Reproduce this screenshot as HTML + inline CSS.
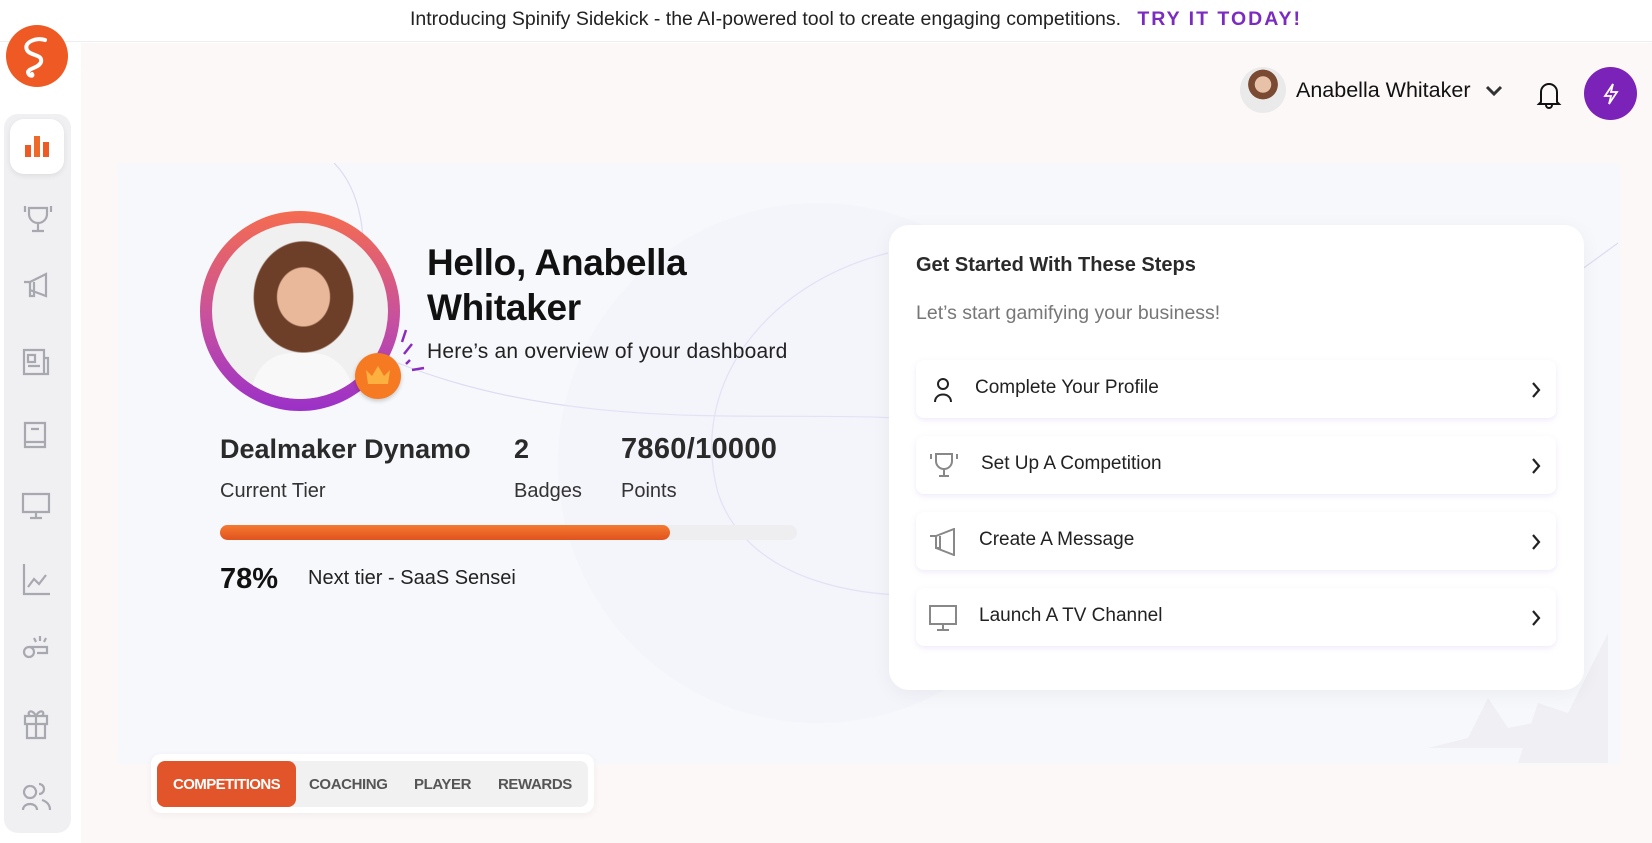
<!DOCTYPE html>
<html><head><meta charset="utf-8"><style>
*{margin:0;padding:0;box-sizing:border-box}
body{width:1652px;height:843px;overflow:hidden;background:#fff;font-family:"Liberation Sans",sans-serif;position:relative;color:#222}
.a{position:absolute}
.item{position:absolute;left:916px;width:640px;height:58px;background:#fff;border-radius:8px;box-shadow:0 2px 6px rgba(170,140,220,.18)}
.item .t{position:absolute;top:17px;font-size:19px;color:#222}
.item .ch{position:absolute;right:14px;top:21px}
.lbl{font-size:20px;color:#333}
</style></head><body>
<div class="a" style="left:0;top:0;width:1652px;height:42px;background:#fff;border-bottom:1px solid #eee"></div>
<div class="a" style="left:410px;top:8px;font-size:19.5px;color:#222;white-space:nowrap">Introducing Spinify Sidekick - the AI-powered tool to create engaging competitions. &nbsp;&nbsp;<b style="color:#7b2bbf;letter-spacing:2px">TRY IT TODAY!</b></div>
<svg class="a" style="left:5px;top:24px" width="64" height="64" viewBox="0 0 64 64"><circle cx="32" cy="32" r="31" fill="#ef5a24"/><path d="M40 16c-8-3-22 2-18 10 3 6 16 4 14 12-2 6-12 6-13 10 0 4 6 5 4 2" stroke="#fff" stroke-width="4" fill="none" stroke-linecap="round"/></svg>
<div class="a" style="left:4px;top:114px;width:67px;height:719px;background:#f0f0f2;border-radius:14px"></div>
<div class="a" style="left:10px;top:119px;width:54px;height:55px;background:#fff;border-radius:14px;box-shadow:0 2px 6px rgba(0,0,0,.08)"></div>
<svg class="a" style="left:24px;top:133px" width="26" height="26"><rect x="1" y="12" width="6" height="12" fill="#ef5a24"/><rect x="10" y="3" width="6" height="21" fill="#ef6a2a"/><rect x="19" y="9" width="6" height="15" fill="#ef5a24"/></svg>
<svg class="a" style="left:0;top:0" width="80" height="843" fill="none" stroke="#a8a8b0" stroke-width="2.2">
<path d="M29 208h18v6a9 9 0 0 1-18 0z M38 223v7 M32 231h12 M25 206v6 M51 206v6"/>
<path d="M24 282h6v14h4v-14 M30 282l16-8v22l-16-6"/>
<path d="M24 350h20v24H24z M44 358h4v16h-4 M28 355h7v7h-7z M28 366h12"/>
<path d="M25 423h20v24H25z M25 442h20 M31 429h8"/>
<path d="M23 494h26v18H23z M36 512v6 M30 518h12"/>
<path d="M24 564v30h26 M28 587l6-8 5 5 7-9"/>
<path d="M24 652a5 5 0 1 0 10 0a5 5 0 0 0-10 0 M29 647h18v6h-10 M34 638l2 4 M40 636v5 M46 638l-2 4"/>
<path d="M25 716h22v8H25z M27 724h18v14H27z M36 716v22 M36 716c-4-8-10-4-6 0 M36 716c4-8 10-4 6 0"/>
<path d="M30 786a6 6 0 1 0 0.1 0 M23 810c0-8 14-8 14 0 M39 784a5 5 0 0 1 0 10 M42 800c6 2 8 6 8 10"/>
</svg>
<div class="a" style="left:81px;top:43px;width:1571px;height:800px;background:#fdf8f8"></div>
<div class="a" style="left:1240px;top:67px;width:46px;height:46px;border-radius:50%;background:radial-gradient(circle at 50% 38%,#e8c2a8 0 22%,#7a4a32 23% 40%,#eaeaea 41%)"></div>
<div class="a" style="left:1296px;top:78px;font-size:21.5px;color:#111">Anabella Whitaker</div>
<svg class="a" style="left:1484px;top:84px" width="20" height="14"><path d="M3 3l7 7 7-7" stroke="#333" stroke-width="3" fill="none"/></svg>
<svg class="a" style="left:1535px;top:78px" width="28" height="32" fill="none" stroke="#111" stroke-width="2"><path d="M6 24V14a8 8 0 0 1 16 0v10l2 2H4z M11 27a3 3 0 0 0 6 0"/></svg>
<div class="a" style="left:1584px;top:67px;width:53px;height:53px;border-radius:50%;background:#7b22b8"></div>
<svg class="a" style="left:1600px;top:82px" width="22" height="24"><path d="M13 2L5 14h6l-2 8 8-12h-6z" stroke="#fff" stroke-width="1.8" fill="none"/></svg>
<div class="a" style="left:118px;top:163px;width:1502px;height:601px;background:#f7f8fc"></div>
<svg class="a" style="left:118px;top:163px" width="1502" height="601" fill="none" stroke="#dcdcf2" stroke-width="1.2">
<path d="M216 0c30 30 30 80 30 100"/>
<path d="M280 200c200 80 420 40 550 60"/>
<path d="M770 90c-120 30-200 130-170 240 30 90 150 110 240 100"/>
<circle cx="700" cy="300" r="260" fill="rgba(238,238,248,.35)" stroke="none"/>
<path d="M1390 160l110-80"/>
<path d="M1310 585l40-10 20-40 20 30 40-8-25 28z M1400 600l20-60 30 10 40-80v130z" fill="#efeff4" stroke="none"/>
</svg>
<div class="a" style="left:200px;top:211px;width:200px;height:200px;border-radius:50%;background:linear-gradient(#f56c4f,#c650a0 55%,#9b30c8)"></div>
<div class="a" style="left:212px;top:223px;width:176px;height:176px;border-radius:50%;background:radial-gradient(ellipse at 52% 42%,#e9b89a 0 20%,#6e3f28 21% 38%,#f0f0f0 39%);overflow:hidden"><div class="a" style="left:40px;top:130px;width:100px;height:60px;background:#f8f8f8;border-radius:40px 40px 0 0"></div></div>
<div class="a" style="left:355px;top:353px;width:46px;height:46px;border-radius:50%;background:#f57a22;box-shadow:0 2px 4px rgba(0,0,0,.2)"></div>
<svg class="a" style="left:364px;top:364px" width="28" height="22"><path d="M2 6l6 6 6-10 6 10 6-6-2 14H4z" fill="#fcb040"/></svg>
<svg class="a" style="left:396px;top:328px" width="30" height="50" stroke="#8a2bc0" stroke-width="2.5"><path d="M10 2l-4 12 M16 16l-8 10 M28 40l-12 2 M14 32l-4 4"/></svg>
<div class="a" style="left:427px;top:240px;font-size:37px;line-height:45px;color:#111;font-weight:bold;letter-spacing:-.3px">Hello, Anabella<br>Whitaker</div>
<div class="a" style="left:427px;top:340px;font-size:21px;color:#222;letter-spacing:.2px">Here’s an overview of your dashboard</div>
<div class="a" style="left:220px;top:434px;font-size:27px;font-weight:bold;color:#2a2a2a">Dealmaker Dynamo</div>
<div class="a" style="left:514px;top:434px;font-size:27px;font-weight:bold;color:#2a2a2a">2</div>
<div class="a" style="left:621px;top:433px;font-size:29px;font-weight:bold;color:#2a2a2a;letter-spacing:.3px">7860/10000</div>
<div class="a lbl" style="left:220px;top:480px">Current Tier</div>
<div class="a lbl" style="left:514px;top:480px">Badges</div>
<div class="a lbl" style="left:621px;top:480px">Points</div>
<div class="a" style="left:220px;top:525px;width:577px;height:15px;border-radius:8px;background:#eeeef0"></div>
<div class="a" style="left:220px;top:525px;width:450px;height:15px;border-radius:8px;background:linear-gradient(#f57a30,#e0521e)"></div>
<div class="a" style="left:220px;top:563px;font-size:29px;color:#111;font-weight:bold">78%</div>
<div class="a" style="left:308px;top:567px;font-size:20px;color:#222">Next tier - SaaS Sensei</div>
<div class="a" style="left:889px;top:225px;width:695px;height:465px;background:#fff;border-radius:20px;box-shadow:0 4px 20px rgba(0,0,0,.05)"></div>
<div class="a" style="left:916px;top:254px;font-size:20px;font-weight:bold;color:#2a2a2a">Get Started With These Steps</div>
<div class="a" style="left:916px;top:302px;font-size:19.5px;color:#777">Let’s start gamifying your business!</div>
<div class="item" style="top:360px"><svg class="a" style="left:16px;top:17px" width="22" height="26" fill="none" stroke="#222" stroke-width="2"><circle cx="11" cy="7" r="5"/><path d="M3 25c0-10 16-10 16 0"/></svg><div class="t" style="left:59px">Complete Your Profile</div><svg class="ch" width="12" height="18"><path d="M3 2l6 7-6 7" stroke="#222" stroke-width="2.2" fill="none"/></svg></div>
<div class="item" style="top:436px"><svg class="a" style="left:12px;top:16px" width="32" height="28" fill="none" stroke="#888" stroke-width="2"><path d="M8 2h16v7a8 8 0 0 1-16 0z M16 17v6 M11 24h10 M3 2v5 M29 2v5"/></svg><div class="t" style="left:65px">Set Up A Competition</div><svg class="ch" width="12" height="18"><path d="M3 2l6 7-6 7" stroke="#222" stroke-width="2.2" fill="none"/></svg></div>
<div class="item" style="top:512px"><svg class="a" style="left:12px;top:16px" width="32" height="28" fill="none" stroke="#888" stroke-width="2"><path d="M2 8h6v12h4V8 M8 8l18-7v26L8 20"/></svg><div class="t" style="left:63px">Create A Message</div><svg class="ch" width="12" height="18"><path d="M3 2l6 7-6 7" stroke="#222" stroke-width="2.2" fill="none"/></svg></div>
<div class="item" style="top:588px"><svg class="a" style="left:12px;top:16px" width="32" height="28" fill="none" stroke="#888" stroke-width="2"><path d="M2 2h26v18H2z M15 20v5 M9 26h12"/></svg><div class="t" style="left:63px">Launch A TV Channel</div><svg class="ch" width="12" height="18"><path d="M3 2l6 7-6 7" stroke="#222" stroke-width="2.2" fill="none"/></svg></div>
<div class="a" style="left:151px;top:754px;width:443px;height:59px;background:#fff;border-radius:10px;box-shadow:0 2px 8px rgba(0,0,0,.05)"></div>
<div class="a" style="left:157px;top:761px;width:431px;height:46px;background:#f1f1f2;border-radius:8px"></div>
<div class="a" style="left:157px;top:761px;width:139px;height:46px;background:#e2542a;border-radius:8px"></div>
<div class="a" style="left:157px;top:776px;width:139px;text-align:center;font-size:15px;color:#fff;font-weight:bold;letter-spacing:-.6px">COMPETITIONS</div>
<div class="a" style="left:309px;top:776px;font-size:15px;color:#555;font-weight:bold;letter-spacing:-.4px">COACHING</div>
<div class="a" style="left:414px;top:776px;font-size:15px;color:#555;font-weight:bold;letter-spacing:-.4px">PLAYER</div>
<div class="a" style="left:498px;top:776px;font-size:15px;color:#555;font-weight:bold;letter-spacing:-.4px">REWARDS</div>
</body></html>
